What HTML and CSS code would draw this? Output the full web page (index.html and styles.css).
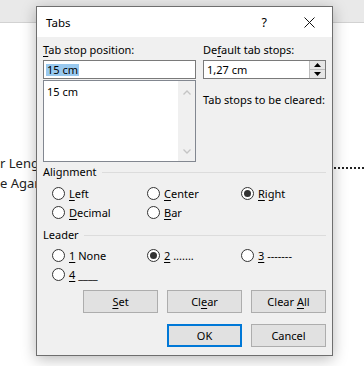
FILE: index.html
```html
<!DOCTYPE html>
<html>
<head>
<meta charset="utf-8">
<link rel="stylesheet" href="styles.css">
</head>
<body>
<div class="app">
  <div class="ribbon"></div>
  <div class="doc">
    <div class="doc-line first"><span class="doc-text">r Leng</span><span class="leader"></span></div>
    <div class="doc-line"><span class="doc-text">e Agar</span></div>
  </div>

  <div class="dialog">
    <div class="titlebar">
      <span class="title">Tabs</span>
      <span class="help">?</span>
      <svg class="close" width="11" height="11" viewBox="0 0 11 11"><path d="M0.5 0.5 L10.5 10.5 M10.5 0.5 L0.5 10.5" stroke="#111" stroke-width="1" fill="none"/></svg>
    </div>
    <div class="body">
      <div class="top">
        <div class="col">
          <div class="label"><u>T</u>ab stop position:</div>
          <div class="input"><span class="sel">15 cm</span></div>
          <div class="listbox">
            <div class="list-items"><div class="item">15 cm</div></div>
            <div class="scroll">
              <svg width="8" height="5" viewBox="0 0 8 5"><path d="M0.5 4.5 L4 1 L7.5 4.5" stroke="#c4c4c4" stroke-width="1.3" fill="none"/></svg>
              <svg width="8" height="5" viewBox="0 0 8 5"><path d="M0.5 0.5 L4 4 L7.5 0.5" stroke="#c4c4c4" stroke-width="1.3" fill="none"/></svg>
            </div>
          </div>
        </div>
        <div class="col">
          <div class="label">De<u>f</u>ault tab stops:</div>
          <div class="input spin-input">
            <span class="val">1,27 cm</span>
            <div class="spinner">
              <div class="spin-btn"><svg width="7" height="4" viewBox="0 0 7 4"><path d="M0 4 L3.5 0 L7 4 Z" fill="#000"/></svg></div>
              <div class="spin-btn"><svg width="7" height="4" viewBox="0 0 7 4"><path d="M0 0 L3.5 4 L7 0 Z" fill="#000"/></svg></div>
            </div>
          </div>
          <div class="label cleared">Tab stops to be cleared:</div>
        </div>
      </div>

      <div class="group align-group">
        <div class="group-head"><span>Alignment</span><span class="rule"></span></div>
        <div class="radios">
          <div class="opt"><span class="radio"></span><span><u>L</u>eft</span></div>
          <div class="opt"><span class="radio"></span><span><u>C</u>enter</span></div>
          <div class="opt"><span class="radio on"></span><span><u>R</u>ight</span></div>
          <div class="opt"><span class="radio"></span><span><u>D</u>ecimal</span></div>
          <div class="opt"><span class="radio"></span><span><u>B</u>ar</span></div>
        </div>
      </div>

      <div class="group leader-group">
        <div class="group-head"><span>Leader</span><span class="rule"></span></div>
        <div class="radios">
          <div class="opt"><span class="radio"></span><span><u>1</u> None</span></div>
          <div class="opt"><span class="radio on"></span><span><u>2</u> .......</span></div>
          <div class="opt"><span class="radio"></span><span><u>3</u> -------</span></div>
          <div class="opt"><span class="radio"></span><span><u>4</u> ____</span></div>
        </div>
      </div>

      <div class="btn-row first-row">
        <button class="btn"><u>S</u>et</button>
        <button class="btn">Cl<u>e</u>ar</button>
        <button class="btn">Clear <u>A</u>ll</button>
      </div>
      <div class="btn-row second-row">
        <button class="btn default">OK</button>
        <button class="btn">Cancel</button>
      </div>
    </div>
  </div>
</div>
</body>
</html>
```

FILE: styles.css
```css
* { box-sizing: border-box; }
html, body { margin: 0; padding: 0; }
body {
  width: 364px;
  height: 366px;
  overflow: hidden;
  background: #ffffff;
  font-family: "Noto Sans", "Open Sans", sans-serif;
}
.app {
  position: relative;
  width: 364px;
  height: 366px;
  overflow: hidden;
}
.ribbon {
  height: 23px;
  background: #e9e9e9;
  border-bottom: 1px solid #d2d2d2;
}
.doc {
  padding-top: 130px;
  font-size: 13px;
  color: #222;
}
.doc-line {
  display: flex;
  align-items: flex-end;
  height: 20px;
  line-height: 20px;
  white-space: nowrap;
}
.doc-text { flex: none; }
.leader {
  flex: 1;
  height: 2px;
  margin: 0 0 4px 4px;
  border-bottom: 2px dotted #222;
}

/* dialog window over the document */
.dialog {
  position: absolute;
  left: 36px;
  top: 6px;
  width: 297px;
  height: 350px;
  border: 1px solid #6e6e6e;
  background: #f0f0f0;
  box-shadow: 0 3px 14px rgba(0, 0, 0, 0.28);
  font-size: 11px;
  color: #000;
  display: flex;
  flex-direction: column;
}
.titlebar {
  height: 30px;
  background: #ffffff;
  display: flex;
  align-items: center;
  padding-left: 9px;
}
.title { flex: 1; font-size: 11.5px; }
.help { margin-right: 37px; font-size: 12.5px; }
.close { margin-right: 17px; }

.body {
  flex: 1;
  padding: 5px 6px 7px 6px;
  display: flex;
  flex-direction: column;
}
.top {
  display: grid;
  grid-template-columns: 153px 123px;
  column-gap: 7px;
}
.col { display: flex; flex-direction: column; }
.label {
  height: 16px;
  line-height: 16px;
  white-space: nowrap;
}
.label.cleared { margin-top: 13px; }
.input {
  margin-top: 2px;
  height: 19px;
  background: #fff;
  border: 1px solid #7a7a7a;
  display: flex;
  align-items: center;
  padding-left: 2px;
}
.sel {
  background: #99c9ef;
  line-height: 12px;
  height: 12px;
  padding: 0 1px;
}
.spin-input { padding-right: 0; }
.val { flex: 1; padding-left: 1px; }
.spinner {
  width: 16px;
  height: 17px;
  display: flex;
  flex-direction: column;
  border-left: 1px solid #bdbdbd;
}
.spin-btn {
  flex: 1;
  display: flex;
  align-items: center;
  justify-content: center;
  background: #e6e6e6;
}
.spin-btn + .spin-btn { border-top: 1px solid #bdbdbd; }

.listbox {
  margin-top: 1px;
  height: 82px;
  border: 1px solid #828790;
  background: #fff;
  display: flex;
}
.list-items { flex: 1; padding: 3px 0 0 3px; }
.item { line-height: 16px; }
.scroll {
  width: 17px;
  background: #f0f0f0;
  display: flex;
  flex-direction: column;
  justify-content: space-between;
  align-items: center;
  padding: 9px 0 7px;
}

.group-head {
  display: flex;
  align-items: center;
  height: 16px;
  line-height: 16px;
}
.rule {
  flex: 1;
  height: 1px;
  background: #dcdcdc;
  margin-left: 5px;
}
.align-group { margin-top: 2px; }
.leader-group { margin-top: 5px; }
.radios {
  display: grid;
  grid-template-columns: 95px 94px auto;
  padding-left: 9px;
  margin-top: 4px;
}
.leader-group .radios { margin-top: 3px; }
.opt {
  display: flex;
  align-items: center;
  height: 19px;
  white-space: nowrap;
}
.radio {
  width: 13px;
  height: 13px;
  border-radius: 50%;
  border: 1px solid #333;
  background: #fff;
  margin-right: 4px;
  display: flex;
  align-items: center;
  justify-content: center;
}
.radio.on::after {
  content: "";
  width: 7px;
  height: 7px;
  border-radius: 50%;
  background: #333;
}

.btn-row {
  display: flex;
  justify-content: flex-end;
  gap: 9px;
}
.first-row { margin-top: 6px; }
.second-row { margin-top: 11px; }
.btn {
  width: 75px;
  height: 23px;
  background: #e1e1e1;
  border: 1px solid #adadad;
  font-family: inherit;
  font-size: 11px;
  color: #000;
  padding: 0;
  margin: 0;
}
.btn.default { border: 2px solid #0078d7; }
u { text-decoration-thickness: 1px; text-underline-offset: 2px; }
```
